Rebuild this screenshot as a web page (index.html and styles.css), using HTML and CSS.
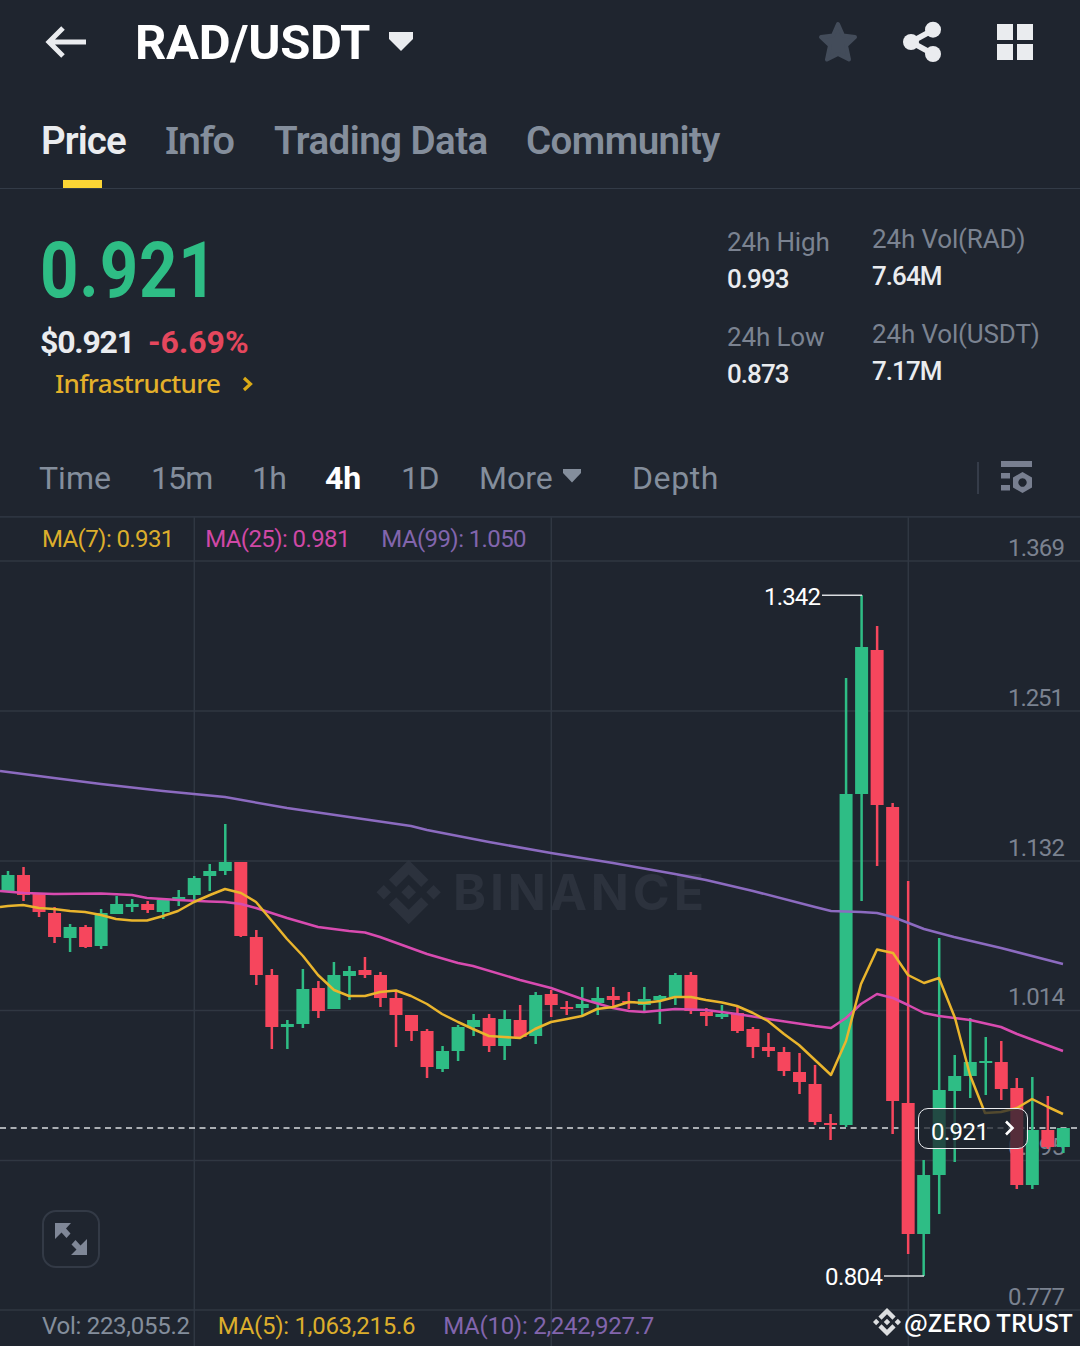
FILE: index.html
```
<!DOCTYPE html>
<html lang="en">
<head>
    <meta charset="UTF-8">
    <meta name="viewport" content="width=device-width, initial-scale=1.0">
    <title>RAD/USDT</title>
    <link rel="stylesheet" href="styles.css">
</head>
<body>
    <header class="header">
        <svg class="back" width="42" height="36" viewBox="0 0 42 36">
            <path d="M41 18H4M18 4L4 18L18 32" fill="none" stroke="#eaecef" stroke-width="5"/>
        </svg>
        <h1 class="pair">RAD/USDT</h1>
        <svg class="caret" width="24" height="20" viewBox="0 0 24 20">
            <path d="M0 0H24V7L12 19L0 7Z" fill="#eaecef"/>
        </svg>
        <div class="actions">
            <svg width="40" height="42" viewBox="0 0 40 42">
                <path d="M20 3L25 14.500L37 16L28 24.500L31 38.500L20 33L9 38.500L12 24.500L3 16L15 14.500Z" fill="#434c5a" stroke="#434c5a" stroke-width="4" stroke-linejoin="round"/>
            </svg>
            <svg width="40" height="42" viewBox="0 0 40 42">
                <path d="M31 9L9 21L31 33" fill="none" stroke="#eaecef" stroke-width="5.500"/>
                <g fill="#eaecef">
                    <circle cx="31" cy="8.700" r="8"/>
                    <circle cx="9" cy="21" r="8"/>
                    <circle cx="31" cy="33" r="8"/>
                </g>
            </svg>
            <svg width="36" height="36" viewBox="0 0 36 36">
                <path d="M0 0h16v16H0zM20 0h16v16H20zM0 20h16v16H0zM20 20h16v16H20z" fill="#eaecef"/>
            </svg>
        </div>
    </header>

    <nav class="tabs">
        <a class="tab active">Price</a>
        <a class="tab info">Info</a>
        <a class="tab data">Trading Data</a>
        <a class="tab community">Community</a>
    </nav>

    <section class="summary">
        <div class="quote">
            <div class="last-price">0.921</div>
            <div class="fiat-row">
                <span class="fiat">$0.921</span>
                <span class="change">-6.69%</span>
            </div>
            <div class="category">
                <span>Infrastructure</span>
                <svg width="12" height="16" viewBox="0 0 12 16">
                    <path d="M2 2L8.500 8L2 14" fill="none" stroke="#d9a916" stroke-width="3.200"/>
                </svg>
            </div>
        </div>
        <div class="stats">
            <div class="stat"><span>24h High</span><b>0.993</b></div>
            <div class="stat"><span>24h Low</span><b>0.873</b></div>
        </div>
        <div class="stats volume">
            <div class="stat"><span>24h Vol(RAD)</span><b>7.64M</b></div>
            <div class="stat"><span>24h Vol(USDT)</span><b>7.17M</b></div>
        </div>
    </section>

    <div class="intervals">
        <span class="time">Time</span>
        <span class="m15">15m</span>
        <span class="h1">1h</span>
        <span class="h4 active">4h</span>
        <span class="d1">1D</span>
        <span class="more">More</span>
        <svg class="more-caret" width="18" height="14" viewBox="0 0 18 14">
            <path d="M0 0H18V4L9 13.500L0 4Z" fill="#848e9c"/>
        </svg>
        <span class="depth">Depth</span>
        <svg class="settings" width="32" height="32" viewBox="0 0 32 32">
            <path d="M0 0h31v6H0zM0 12h9v5.500H0zM0 24h9v5.500H0z" fill="#787f90"/>
            <path d="M21.500 11L31 16.500V26.500L21.500 32L12 26.500V16.500ZM21.500 17.300a4.200 4.200 0 1 0 .01 0Z" fill="#787f90" fill-rule="evenodd"/>
        </svg>
    </div>

    <main class="chart">
        <svg id="plot" width="1080" height="830" viewBox="0 516 1080 830">
            <defs>
                <path id="logo" d="M38.730 53.200l24.590-24.580 24.600 24.600 14.300-14.310L63.320 0l-38.900 38.900zM0 63.310l14.300-14.310 14.310 14.310-14.310 14.300zM38.730 73.410l24.590 24.590 24.600-24.600 14.310 14.290-38.900 38.910-38.910-38.880zM98 63.310l14.300-14.310 14.310 14.300-14.310 14.320zM77.830 63.300L63.320 48.780 48.810 63.280l14.510 14.500z"/>
            </defs>
            <g class="watermark">
                <use href="#logo" transform="translate(376.500 860) scale(.508)"/>
                <text x="453" y="910" textLength="251">BINANCE</text>
            </g>
            <path class="grid" d="M0 561H1080M0 711H1080M0 861H1080M0 1010.500H1080M0 1160.500H1080M0 1310H1080M194.300 516V1346M551.300 516V1346M908.300 516V1346"/>
            <path class="grid top" d="M0 516.500H1080"/>
            <g class="axis">
                <text x="1008" y="556" textLength="57">1.369</text>
                <text x="1008" y="706" textLength="56">1.251</text>
                <text x="1008" y="856" textLength="57">1.132</text>
                <text x="1008" y="1005" textLength="57">1.014</text>
                <text x="1008" y="1155" textLength="57">0.895</text>
                <text x="1008" y="1305" textLength="57">0.777</text>
            </g>
            <path class="last-line" d="M0 1128H1080"/>
            <g id="candles"></g>
            <g id="averages"></g>
            <g class="extremes">
                <path d="M822 595.300H862M884 1276H924"/>
                <text x="764" y="605" textLength="57">1.342</text>
                <text x="825" y="1285" textLength="58">0.804</text>
            </g>
        </svg>

        <div class="legend">
            <span class="ma-a">MA(7): 0.931</span>
            <span class="ma-b">MA(25): 0.981</span>
            <span class="ma-c">MA(99): 1.050</span>
        </div>

        <div class="price-tag">
            <span>0.921</span>
            <svg width="12" height="16" viewBox="0 0 12 16">
                <path d="M2 1.500L8.500 8L2 14.500" fill="none" stroke="#fff" stroke-width="2.600"/>
            </svg>
        </div>

        <div class="expand">
            <svg width="32" height="32" viewBox="0 0 32 32">
                <path d="M0 0H16L11 5.500L15.500 10.500L11.500 15L6.500 9.500L0 16ZM32 32H16L21.500 26.500L16.500 21.500L20.500 17L25.500 22.500L32 16Z" fill="#7f8797"/>
            </svg>
        </div>

        <div class="legend volume-legend">
            <span class="vol">Vol: 223,055.2</span>
            <span class="ma-a">MA(5): 1,063,215.6</span>
            <span class="ma-c">MA(10): 2,242,927.7</span>
        </div>

        <div class="author">
            <svg width="28" height="28" viewBox="0 0 126.610 126.610"><use href="#logo" fill="#dcdee0"/></svg>
            <span>@ZERO TRUST</span>
        </div>
    </main>

    <script src="chart.js"></script>
</body>
</html>
```
FILE: styles.css
```
* {
    box-sizing: border-box;
}
body {
    margin: 0;
    width: 1080px;
    height: 1346px;
    overflow: hidden;
    background: #1f252f;
    color: #eaecef;
    font-family: Roboto, "Liberation Sans", sans-serif;
}
svg {
    display: block;
    flex: none;
}
span, a {
    white-space: nowrap;
}

/* header */
.header {
    display: flex;
    align-items: center;
    height: 84px;
    padding: 0 47.500px 0 45px;
}
.pair {
    margin: 2px 0 0 48px;
    width: 236px;
    color: #fff;
    font-size: 49px;
    line-height: 60px;
    font-weight: 700;
    letter-spacing: -0.3px;
}
.caret {
    margin-left: 18px;
}
.actions {
    display: flex;
    align-items: center;
    margin-left: auto;
}
.actions svg + svg {
    margin-left: 44px;
}
.actions svg:last-child {
    margin-left: 55px;
}

/* tabs */
.tabs {
    display: flex;
    height: 105px;
    padding-left: 41px;
    border-bottom: 1px solid #333b47;
    color: #848e9c;
    font-size: 38.500px;
    font-weight: 600;
    line-height: 114px;
    letter-spacing: -0.550px;
}
.tab {
    position: relative;
    width: 85px;
}
.tab.active {
    color: #eaecef;
    letter-spacing: -0.900px;
}
.tab.active::after {
    content: "";
    position: absolute;
    left: 22px;
    bottom: 0;
    width: 39px;
    height: 8px;
    background: #fcd535;
}
.tab.info {
    margin-left: 39px;
    width: 70px;
    font-family: "Noto Sans", sans-serif;
    font-size: 38px;
    line-height: 111px;
    letter-spacing: -1.800px;
}
.tab.data {
    margin-left: 39px;
    width: 213px;
}
.tab.community {
    margin-left: 39px;
}

/* price summary */
.summary {
    display: flex;
    height: 251px;
}
.quote {
    flex: none;
    width: 727px;
    padding: 41px 0 0 40px;
}
.last-price {
    width: 205px;
    height: 80px;
    color: #2ebd85;
    font-size: 78px;
    font-weight: 700;
    line-height: 81px;
    letter-spacing: 1px;
    transform: scaleX(.86);
    transform-origin: left;
}
.fiat-row {
    display: flex;
    margin-top: 11px;
    height: 42px;
    font-size: 32px;
    font-weight: 700;
    line-height: 42px;
    letter-spacing: -1.200px;
}
.fiat {
    width: 108px;
}
.change {
    color: #e5475d;
    letter-spacing: 0;
}
.category {
    display: flex;
    align-items: center;
    margin-left: 15px;
    height: 42px;
    color: #e3b02a;
    font-family: "Noto Sans", sans-serif;
    font-size: 26px;
    font-weight: 500;
    letter-spacing: -0.650px;
}
.category span {
    margin-top: -2px;
    width: 187px;
}
.stats {
    flex: none;
    padding-top: 35px;
    width: 145px;
}
.stats.volume {
    padding-top: 32px;
    width: 200px;
}
.stat {
    height: 95px;
    font-size: 26px;
    line-height: 37px;
}
.stat span, .stat b {
    display: block;
}
.stat span {
    color: #7b8391;
    letter-spacing: -0.150px;
}
.stat b {
    font-weight: 500;
    letter-spacing: -0.950px;
}

/* interval toolbar */
.intervals {
    display: flex;
    align-items: center;
    height: 76px;
    padding: 0 47px 0 39px;
    color: #848e9c;
    font-size: 32px;
}
.intervals .active {
    color: #fff;
    font-weight: 700;
}
.time {
    width: 112px;
}
.m15 {
    width: 101px;
    letter-spacing: -0.900px;
}
.h1 {
    width: 73px;
    letter-spacing: -0.800px;
}
.h4 {
    width: 76px;
}
.d1 {
    width: 78px;
    letter-spacing: -0.500px;
}
.more {
    width: 84px;
}
.more-caret {
    margin-top: -5px;
}
.depth {
    margin-left: 51px;
    margin-right: auto;
    letter-spacing: 0.600px;
}
.intervals::after {
    content: "";
    order: 1;
    margin-right: 22px;
    width: 2px;
    height: 32px;
    background: #353c49;
}
.settings {
    order: 2;
    margin-top: -2px;
}

/* chart */
.chart {
    position: relative;
    height: 830px;
}
.grid {
    fill: none;
    stroke: #303742;
    stroke-width: 1.500;
}
.grid.top {
    stroke: #2d3440;
    stroke-width: 2.500;
}
.watermark {
    fill: #2c323d;
    font-family: Inter, sans-serif;
    font-size: 50px;
    font-weight: 700;
}
.axis {
    fill: #7b8290;
    font-size: 24px;
}
.last-line {
    stroke: #d9dce0;
    stroke-width: 1.600;
    stroke-dasharray: 6 4.500;
}
.extremes {
    fill: #fff;
    font-size: 24px;
}
.extremes path {
    stroke: #d9dce0;
    stroke-width: 1.600;
}
.up {
    fill: #2ebd85;
}
.down {
    fill: #f6465d;
}
.average {
    fill: none;
    stroke-width: 2.500;
    stroke-linejoin: round;
}
.legend {
    position: absolute;
    left: 42px;
    top: 8px;
    display: flex;
    gap: 31.500px;
    font-size: 24px;
    line-height: 30px;
    letter-spacing: -0.600px;
}
.volume-legend {
    top: 795px;
    gap: 28px;
    letter-spacing: -0.270px;
}
.ma-a {
    color: #dcae2c;
}
.ma-b {
    color: #d048a6;
}
.ma-c {
    color: #8265ad;
}
.vol {
    color: #848e9c;
}
.price-tag {
    position: absolute;
    left: 918px;
    top: 592px;
    display: flex;
    align-items: center;
    justify-content: space-between;
    width: 110px;
    height: 41px;
    padding: 7px 11px 0 12px;
    border: 1.500px solid #eaecef;
    border-radius: 10px;
    background: rgba(31, 37, 47, .75);
    color: #fff;
    font-size: 24px;
    letter-spacing: -0.600px;
}
.price-tag svg {
    margin-top: -8px;
}
.expand {
    position: absolute;
    left: 42px;
    top: 694px;
    display: flex;
    align-items: center;
    justify-content: center;
    width: 58px;
    height: 58px;
    border: 2px solid #333a46;
    border-radius: 14px;
}
.author {
    position: absolute;
    left: 873px;
    top: 796px;
    display: flex;
    align-items: center;
    gap: 3px;
    height: 20px;
    color: #fff;
    font-family: "Noto Sans CJK SC", sans-serif;
    font-size: 24.500px;
    font-weight: 500;
    line-height: 20px;
    letter-spacing: -0.250px;
}
```
FILE: chart.js
```
const FIRST_X = 8;
const STEP = 15.52;
const BODY_WIDTH = 13;

// [direction, body top, body bottom, wick top, wick bottom]
const candles = [
    ['up', 875, 892, 871, 892], ['down', 875, 895, 867, 901], ['down', 894, 912, 894, 917],
    ['down', 913, 937, 907, 943], ['up', 927, 938, 924, 952], ['down', 927, 947, 925, 948],
    ['up', 913, 946, 909, 949], ['up', 904, 914, 896, 914], ['up', 904, 907, 899, 912],
    ['down', 904, 910, 901, 913], ['up', 900, 912, 899, 919], ['up', 897, 900, 890, 906],
    ['up', 878, 895, 876, 900], ['up', 871, 876, 864, 891], ['up', 862, 871, 824, 875],
    ['down', 862, 936, 862, 937], ['down', 937, 975, 930, 985], ['down', 975, 1027, 969, 1049],
    ['up', 1024, 1027, 1020, 1049], ['up', 989, 1024, 969, 1028], ['down', 988, 1011, 981, 1018],
    ['up', 975, 1009, 962, 1009], ['up', 971, 976, 966, 1000], ['down', 970, 975, 957, 978],
    ['down', 975, 998, 972, 1007], ['down', 998, 1015, 990, 1047], ['down', 1015, 1031, 1015, 1041],
    ['down', 1031, 1067, 1029, 1078], ['up', 1051, 1069, 1046, 1072], ['up', 1027, 1051, 1025, 1061],
    ['up', 1020, 1027, 1014, 1036], ['down', 1018, 1046, 1014, 1052], ['up', 1019, 1046, 1010, 1060],
    ['down', 1020, 1037, 1005, 1038], ['up', 995, 1036, 992, 1044], ['down', 994, 1005, 990, 1017],
    ['down', 1007, 1009, 1001, 1015], ['up', 1004, 1008, 987, 1016], ['up', 998, 1003, 987, 1015],
    ['down', 996, 1000, 987, 1007], ['down', 1001, 1003, 992, 1009], ['up', 999, 1005, 987, 1011],
    ['up', 996, 1000, 995, 1024], ['up', 975, 997, 973, 1005], ['down', 975, 1011, 972, 1014],
    ['down', 1012, 1016, 1008, 1026], ['up', 1014, 1017, 1005, 1019], ['down', 1013, 1031, 1007, 1033],
    ['down', 1029, 1047, 1027, 1058], ['down', 1047, 1051, 1033, 1057], ['down', 1052, 1071, 1047, 1076],
    ['down', 1072, 1082, 1053, 1094], ['down', 1084, 1122, 1065, 1125], ['down', 1123, 1125, 1114, 1140],
    ['up', 794, 1125, 678, 1127], ['up', 647, 794, 595, 901], ['down', 650, 805, 626, 866],
    ['down', 807, 1101, 803, 1134], ['down', 1103, 1234, 881, 1254], ['up', 1175, 1234, 1160, 1276],
    ['up', 1090, 1175, 938, 1214], ['up', 1076, 1091, 1055, 1162], ['up', 1062, 1076, 1018, 1098],
    ['up', 1061, 1063, 1037, 1095], ['down', 1062, 1089, 1041, 1100], ['down', 1088, 1185, 1078, 1189],
    ['up', 1130, 1185, 1077, 1189], ['down', 1130, 1147, 1096, 1149], ['up', 1128, 1147, 1128, 1153]
];

const averages = [
    {
        color: '#8c6bc0',
        points: '0,771 54,778 101,784 163,791 225,797 287,808 349,817 411,826 427,830 489,842 551,853 613,863 675,874 706,880 753,891 815,907 831,911 861,912 877,913 893,917 924,929 954,937 1001,948 1063,964'
    },
    {
        color: '#d84bb0',
        points: '0,891 24,893 54,894 101,893.5 132,895 147,898 178,900 209,901.5 225,902 241,904 256,908 287,918 318,927 349,931 365,932.5 380,937 427,954 458,963 473,966 520,980 551,988 582,999 613,1008 629,1011 644,1012 675,1009 706,1010 737,1014 768,1019 815,1026 831,1028 846,1018 861,1004 877,994 893,998 908,1005 924,1013 939,1016 970,1020 1001,1027 1017,1034 1063,1051'
    },
    {
        color: '#eab52d',
        points: '0,907 8,906 23,905 39,908 54,909 70,911 85,912 101,915 116,919 132,920.5 147,920.5 163,916 178,911 194,902 210,895 225,889 241,893 256,902 272,921 287,939 303,956 318,975 334,990 349,996 365,996 380,992 396,990.5 411,996 427,1004 442,1014 458,1022 473,1029 489,1036 504,1037 520,1038 535,1029 551,1022 567,1019 582,1016 597,1009 613,1007 629,1002 644,1003 660,1001 675,997 691,997 706,1000 722,1002.5 737,1006 753,1013 768,1021 784,1034 799,1045 815,1060 831,1075 846,1041 861,984 877,949.5 893,953 908,975 924,983 939,978 955,1018 970,1075 985,1113 1001,1112 1017,1108 1032,1099 1048,1107 1063,1114'
    }
];

document.getElementById('candles').innerHTML = candles.map(([dir, top, bottom, high, low], i) => {
    const x = FIRST_X + i * STEP;
    return `<g class="${dir}">
        <rect x="${x - 1.25}" y="${high}" width="2.5" height="${low - high}"/>
        <rect x="${x - BODY_WIDTH / 2}" y="${top}" width="${BODY_WIDTH}" height="${bottom - top}"/>
    </g>`;
}).join('');

document.getElementById('averages').innerHTML = averages.map(line =>
    `<polyline class="average" stroke="${line.color}" points="${line.points}"/>`
).join('');
```
